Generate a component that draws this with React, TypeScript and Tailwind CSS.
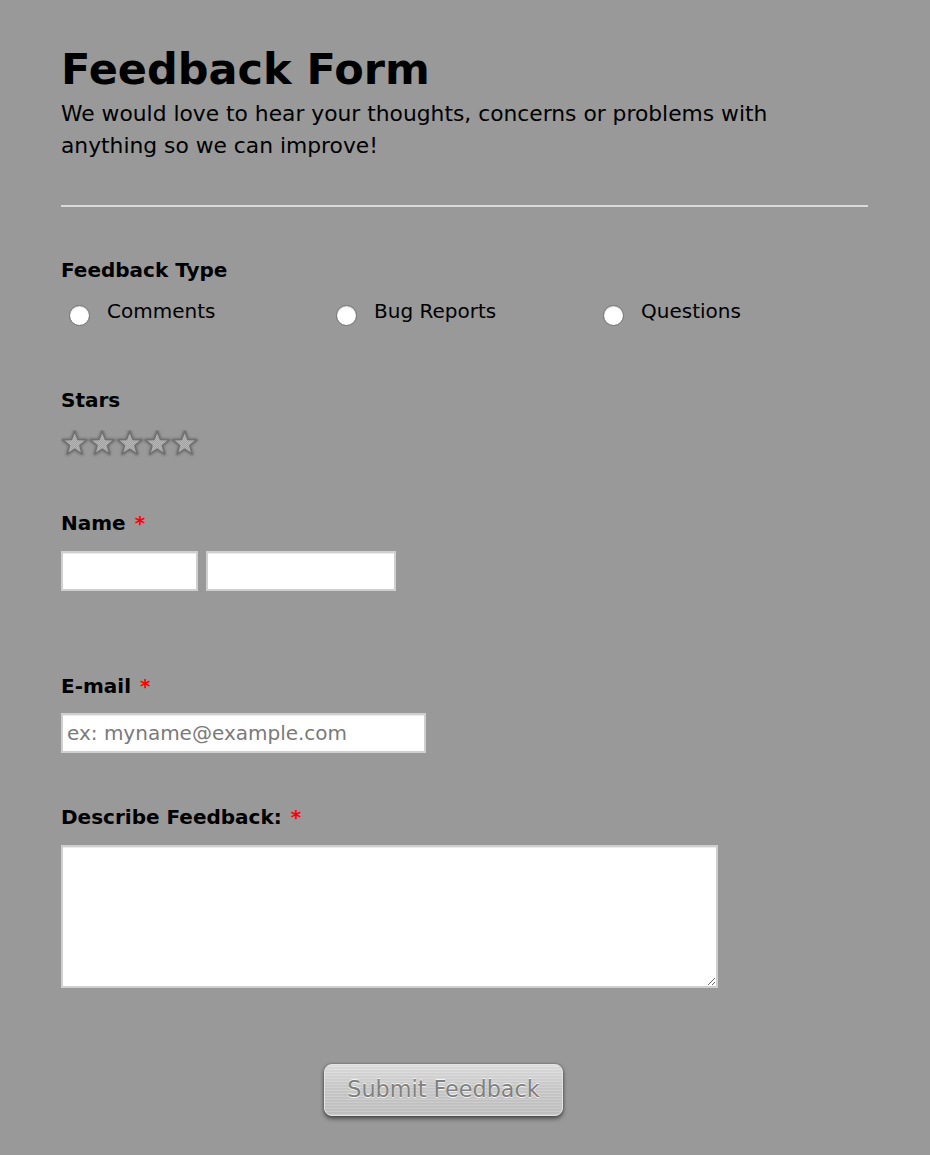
import React from "react";

const font = { fontFamily: '"DejaVu Sans", Verdana, sans-serif' };

function Req() {
  return <span className="ml-[9px] font-bold text-[#ff0000]">*</span>;
}

function Radio({ label }: { label: string }) {
  return (
    <label className="flex w-[267px] items-start pl-[8px]">
      <span className="mt-[6px] h-[21px] w-[21px] shrink-0 rounded-full border border-[#6f6f6f] bg-white shadow-[inset_0_1px_1px_rgba(0,0,0,0.15)]" />
      <span className="ml-[17px] text-[20px] leading-[24px] text-black">{label}</span>
    </label>
  );
}

function Stars() {
  // five empty rating stars
  const star = (cx: number) => {
    const R = 12.6;
    const r = 5.4;
    const cy = 13.8;
    const pts: string[] = [];
    for (let i = 0; i < 10; i++) {
      const rad = i % 2 === 0 ? R : r;
      const a = (Math.PI / 5) * i - Math.PI / 2;
      pts.push(`${(cx + rad * Math.cos(a)).toFixed(2)},${(cy + rad * Math.sin(a)).toFixed(2)}`);
    }
    return pts.join(" ");
  };
  return (
    <svg width="145" height="28" viewBox="0 0 145 28" className="mt-[18px] block">
      <defs>
        <pattern id="chk" width="2" height="2" patternUnits="userSpaceOnUse">
          <rect width="2" height="2" fill="#b6b6b6" />
          <rect width="1" height="1" fill="#a2a2a2" />
          <rect x="1" y="1" width="1" height="1" fill="#a2a2a2" />
        </pattern>
        <filter id="glow" x="-20%" y="-20%" width="140%" height="140%">
          <feGaussianBlur stdDeviation="0.9" />
        </filter>
      </defs>
      {[0, 1, 2, 3, 4].map((i) => {
        const cx = 13.7 + i * 27.5;
        return (
          <g key={i}>
            <polygon points={star(cx)} fill="none" stroke="#777777" strokeWidth="3.4" strokeLinejoin="round" filter="url(#glow)" />
            <polygon points={star(cx)} fill="url(#chk)" stroke="#6f6f6f" strokeWidth="1.4" strokeLinejoin="round" />
          </g>
        );
      })}
    </svg>
  );
}

const fieldCls =
  "block h-[40px] border-2 border-[#cfcfcf] bg-white px-[4px] text-[20px] text-black outline-none shadow-[inset_0_1px_0_#ececec] placeholder:text-[#7a7a7a]";

export default function App() {
  return (
    <div className="min-h-[1155px] w-full bg-[#999999] px-[61px] pt-[48px] pb-[36px]" style={font}>
      <div className="w-[807px]">
        <h1 className="text-[43px] font-bold leading-[43px] text-black">Feedback Form</h1>
        <p className="mt-[7px] max-w-[780px] text-[21.8px] leading-[32px] text-black">
          We would love to hear your thoughts, concerns or problems with anything so we can improve!
        </p>

        <div className="mt-[43px] h-[2px] bg-[#dadada]" />

        <div className="mt-[51px] text-[20px] font-bold leading-[24px] text-black">Feedback Type</div>
        <div className="mt-[17px] flex">
          <Radio label="Comments" />
          <Radio label="Bug Reports" />
          <Radio label="Questions" />
        </div>

        <div className="mt-[62px] text-[20px] font-bold leading-[24px] text-black">Stars</div>
        <Stars />

        <div className="mt-[53px] text-[20px] font-bold leading-[24px] text-black">
          Name
          <Req />
        </div>
        <div className="mt-[16px] flex gap-[8px]">
          <input className={`${fieldCls} w-[137px]`} style={font} />
          <input className={`${fieldCls} w-[190px]`} style={font} />
        </div>

        <div className="mt-[83px] text-[20px] font-bold leading-[24px] text-black">
          E-mail
          <Req />
        </div>
        <input
          className={`${fieldCls} mt-[15px] w-[365px]`}
          style={font}
          placeholder="ex: myname@example.com"
        />

        <div className="mt-[52px] text-[20px] font-bold leading-[24px] text-black">
          Describe Feedback:
          <Req />
        </div>
        <textarea
          className="mt-[16px] block h-[143px] w-[657px] border-2 border-[#cfcfcf] bg-white p-[4px] text-[20px] text-black outline-none shadow-[inset_0_1px_0_#ececec]"
          style={font}
        />

        <div className="mt-[76px] pl-[263px]">
          <button
            type="button"
            className="h-[52px] w-[239px] rounded-[8px] border border-[#e4e4e4] bg-[repeating-linear-gradient(0deg,rgba(255,255,255,0.14)_0px,rgba(255,255,255,0.14)_1px,rgba(0,0,0,0.05)_2px,rgba(0,0,0,0)_3px),linear-gradient(180deg,#dedede_0%,#cacaca_45%,#c0c0c0_100%)] text-[22.3px] text-[#808080] shadow-[0_3px_4px_rgba(0,0,0,0.45),0_0_3px_rgba(0,0,0,0.35)] [text-shadow:0_1px_0_#f0f0f0,0_-1px_0_#f4f4f4]"
            style={font}
          >
            Submit Feedback
          </button>
        </div>
      </div>
    </div>
  );
}
